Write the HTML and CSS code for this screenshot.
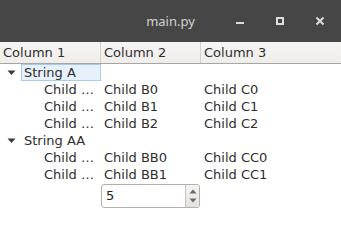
FILE: index.html
```html
<!DOCTYPE html>
<html lang="en">
<head>
  <meta charset="UTF-8">
  <title>main.py</title>
  <link rel="stylesheet" href="styles.css">
</head>
<body>

  <!-- Barra de título -->
  <div class="titlebar">
    <span class="title">main.py</span>
    <div class="controls">
      <svg class="btn" width="10" height="10" viewBox="0 0 10 10"><rect x="1" y="6" width="8" height="2" fill="#dcdcdc"/></svg>
      <svg class="btn" width="10" height="10" viewBox="0 0 10 10"><path d="M1 1h8v8h-8z M3 3v4h4v-4z" fill="#dcdcdc" fill-rule="evenodd"/></svg>
      <svg class="btn" width="10" height="10" viewBox="0 0 10 10"><path d="M1.5 1.5l7 7M8.5 1.5l-7 7" stroke="#dcdcdc" stroke-width="2"/></svg>
    </div>
  </div>

  <!-- Árvore -->
  <div class="tree">
    <div class="header">
      <div class="hcell">Column 1</div>
      <div class="hcell">Column 2</div>
      <div class="hcell last">Column 3</div>
    </div>

    <div class="row">
      <div class="cell first">
        <svg class="arrow" width="9" height="6" viewBox="0 0 9 6"><path d="M0.5 0.5h8l-4 4.5z" fill="#3a3a3a"/></svg>
        <span class="item current">String A</span>
      </div>
      <div class="cell"></div>
      <div class="cell"></div>
    </div>
    <div class="row">
      <div class="cell first"><span class="item child">Child …</span></div>
      <div class="cell">Child B0</div>
      <div class="cell">Child C0</div>
    </div>
    <div class="row">
      <div class="cell first"><span class="item child">Child …</span></div>
      <div class="cell">Child B1</div>
      <div class="cell">Child C1</div>
    </div>
    <div class="row">
      <div class="cell first"><span class="item child">Child …</span></div>
      <div class="cell">Child B2</div>
      <div class="cell">Child C2</div>
    </div>

    <div class="row">
      <div class="cell first">
        <svg class="arrow" width="9" height="6" viewBox="0 0 9 6"><path d="M0.5 0.5h8l-4 4.5z" fill="#3a3a3a"/></svg>
        <span class="item">String AA</span>
      </div>
      <div class="cell"></div>
      <div class="cell"></div>
    </div>
    <div class="row">
      <div class="cell first"><span class="item child">Child …</span></div>
      <div class="cell">Child BB0</div>
      <div class="cell">Child CC0</div>
    </div>
    <div class="row">
      <div class="cell first"><span class="item child">Child …</span></div>
      <div class="cell">Child BB1</div>
      <div class="cell">Child CC1</div>
    </div>

    <!-- Spinbox -->
    <div class="spin-row">
      <div class="spinbox">
        <span class="value">5</span>
        <div class="spin-buttons">
          <svg width="8" height="5" viewBox="0 0 8 5"><path d="M0.5 4.5l3.5-4 3.5 4z" fill="#6a6a6a"/></svg>
          <svg width="8" height="5" viewBox="0 0 8 5"><path d="M0.5 0.5h7l-3.5 4z" fill="#6a6a6a"/></svg>
        </div>
      </div>
    </div>
  </div>

</body>
</html>
```

FILE: styles.css
```css
body {
  margin: 0;
  padding: 0;
  width: 341px;
  height: 242px;
  overflow: hidden;
  background-color: #fff;
  font-family: "DejaVu Sans", sans-serif;
  font-size: 13px;
  color: #2e2e2e;
}

/* Barra de título */
.titlebar {
  height: 42px;
  background-color: #464646;
  display: flex;
  align-items: center;
  position: relative;
}

.title {
  flex: 1;
  text-align: center;
  font-family: "Noto Sans", sans-serif;
  font-size: 13px;
  color: #d2d2d2;
  margin-top: -1px;
}

.controls {
  position: absolute;
  right: 16px;
  top: 16px;
  display: flex;
  gap: 30px;
}

.btn {
  display: block;
}

/* Cabeçalho das colunas */
.header {
  display: grid;
  grid-template-columns: 101px 100px 1fr;
  height: 21px;
  background: linear-gradient(#f7f6f4, #efedea);
  border-bottom: 1px solid #a8a6a3;
}

.hcell {
  padding-left: 3px;
  line-height: 21px;
  border-right: 1px solid #d4d1cd;
  color: #2e2e2e;
}

.hcell.last {
  border-right: none;
}

/* Linhas */
.row {
  display: grid;
  grid-template-columns: 101px 100px 1fr;
  height: 17px;
  line-height: 17px;
}

.cell {
  padding-left: 3px;
  white-space: nowrap;
  overflow: hidden;
}

.cell.first {
  padding-left: 0;
  position: relative;
}

.arrow {
  position: absolute;
  left: 7px;
  top: 6px;
}

.item {
  display: block;
  margin-left: 21px;
  padding-left: 3px;
  height: 17px;
  box-sizing: border-box;
}

.item.current {
  width: 80px;
  background-color: #e7f1fb;
  border: 1px solid #a9cbe9;
  line-height: 15px;
  padding-left: 2px;
}

.item.child {
  margin-left: 41px;
}

/* Spinbox */
.spin-row {
  padding: 1px 0 0 101px;
}

.spinbox {
  width: 99px;
  height: 24px;
  box-sizing: border-box;
  border: 1px solid #b3b0ac;
  border-radius: 3px;
  display: flex;
  overflow: hidden;
}

.value {
  flex: 1;
  padding-left: 4px;
  line-height: 22px;
  color: #202020;
}

.spin-buttons {
  width: 13px;
  border-left: 1px solid #c8c5c1;
  background: linear-gradient(#f4f3f1, #e4e2df);
  display: flex;
  flex-direction: column;
  align-items: center;
  justify-content: center;
  gap: 4px;
}

.spin-buttons svg {
  display: block;
}
```
